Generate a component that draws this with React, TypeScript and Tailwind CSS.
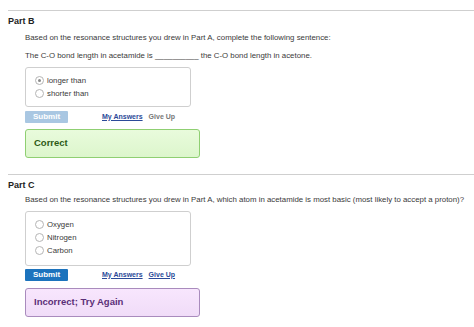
import React from 'react'

type Choice = { label: string; checked?: boolean }

function Radio({ checked }: { checked?: boolean }) {
  return (
    <span className="w-[9px] h-[9px] rounded-full border border-[#b5b5b5] bg-white flex items-center justify-center shrink-0">
      {checked && <span className="w-[3px] h-[3px] rounded-full bg-[#8a8a8a]" />}
    </span>
  )
}

function ChoiceBox({ choices, height }: { choices: Choice[]; height: string }) {
  return (
    <div className={`ml-[25px] w-[166px] ${height} border border-[#cfcfcf] rounded-[3px] pt-[6px] pl-[9px] flex flex-col`}>
      {choices.map((c) => (
        <label key={c.label} className="flex items-center gap-[3px] h-[13px] text-[7.8px] text-[#3a3a3a]">
          <Radio checked={c.checked} />
          <span>{c.label}</span>
        </label>
      ))}
    </div>
  )
}

function Actions({ disabled }: { disabled?: boolean }) {
  return (
    <div className="ml-[25px] flex items-center h-[12px]">
      <button
        className={`w-[43px] h-full rounded-[1px] text-white font-bold text-[8px] leading-none ${
          disabled ? 'bg-[#a9c7e2]' : 'bg-[#1c73bd]'
        }`}
      >
        Submit
      </button>
      <span className="ml-[34px] text-[7px] font-bold text-[#2b4a99] underline">My Answers</span>
      <span
        className={`ml-[6px] text-[7px] font-bold ${
          disabled ? 'text-[#777]' : 'text-[#2b4a99] underline'
        }`}
      >
        Give Up
      </span>
    </div>
  )
}

export default function App() {
  return (
    <div
      className="w-[474px] h-[327px] bg-white overflow-hidden"
      style={{ fontFamily: '"Liberation Sans", Arial, sans-serif' }}
    >
      <div className="pt-[10px]">
        <div className="ml-[8px] h-px bg-[#cfcfcf]" />
        <h2 className="ml-[8px] mt-[4px] h-[12px] leading-[12px] text-[9px] font-bold text-[#222]">Part B</h2>
        <p className="ml-[25px] mt-[5px] h-[12px] leading-[12px] text-[7.85px] text-[#3a3a3a]">
          Based on the resonance structures you drew in Part A, complete the following sentence:
        </p>
        <p className="ml-[25px] mt-[6px] h-[12px] leading-[12px] text-[7.85px] text-[#3a3a3a]">
          The C-O bond length in acetamide is __________ the C-O bond length in acetone.
        </p>
        <div className="mt-[5px]">
          <ChoiceBox height="h-[40px]" choices={[{ label: 'longer than', checked: true }, { label: 'shorter than' }]} />
        </div>
        <div className="mt-[4px]">
          <Actions disabled />
        </div>
        <div className="ml-[25px] mt-[6px] w-[175px] h-[29px] rounded-[3px] border border-[#8fcf72] bg-gradient-to-b from-[#e9fbdc] to-[#dcf6cc] flex items-center pl-[8px]">
          <span className="text-[9.5px] font-bold text-[#2e5a16]">Correct</span>
        </div>

        <div className="ml-[8px] mt-[16px] h-px bg-[#cfcfcf]" />
        <h2 className="ml-[8px] mt-[4px] h-[12px] leading-[12px] text-[9px] font-bold text-[#222]">Part C</h2>
        <p className="ml-[25px] mt-[3px] h-[12px] leading-[12px] text-[7.85px] text-[#3a3a3a]">
          Based on the resonance structures you drew in Part A, which atom in acetamide is most basic (most likely to accept a proton)?
        </p>
        <div className="mt-[5px]">
          <ChoiceBox height="h-[55px]" choices={[{ label: 'Oxygen' }, { label: 'Nitrogen' }, { label: 'Carbon' }]} />
        </div>
        <div className="mt-[3px]">
          <Actions />
        </div>
        <div className="ml-[25px] mt-[7px] w-[175px] h-[29px] rounded-[3px] border border-[#a98bbd] bg-gradient-to-b from-[#f8e6fd] to-[#f0dcf8] flex items-center pl-[8px]">
          <span className="text-[9.5px] font-bold text-[#5b2f78]">Incorrect; Try Again</span>
        </div>
      </div>
    </div>
  )
}
